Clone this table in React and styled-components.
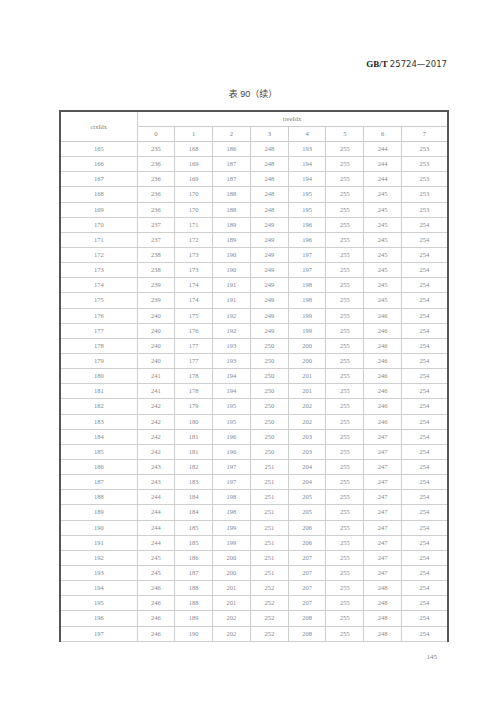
import React from "react";
import styled, { createGlobalStyle } from "styled-components";

const GlobalStyle = createGlobalStyle`
  html, body {
    margin: 0;
    padding: 0;
    background: #ffffff;
  }
`;

const rows = [
  [165, 235, 168, 186, 248, 193, 255, 244, 253],
  [166, 236, 169, 187, 248, 194, 255, 244, 253],
  [167, 236, 169, 187, 248, 194, 255, 244, 253],
  [168, 236, 170, 188, 248, 195, 255, 245, 253],
  [169, 236, 170, 188, 248, 195, 255, 245, 253],
  [170, 237, 171, 189, 249, 196, 255, 245, 254],
  [171, 237, 172, 189, 249, 196, 255, 245, 254],
  [172, 238, 173, 190, 249, 197, 255, 245, 254],
  [173, 238, 173, 190, 249, 197, 255, 245, 254],
  [174, 239, 174, 191, 249, 198, 255, 245, 254],
  [175, 239, 174, 191, 249, 198, 255, 245, 254],
  [176, 240, 175, 192, 249, 199, 255, 246, 254],
  [177, 240, 176, 192, 249, 199, 255, 246, 254],
  [178, 240, 177, 193, 250, 200, 255, 246, 254],
  [179, 240, 177, 193, 250, 200, 255, 246, 254],
  [180, 241, 178, 194, 250, 201, 255, 246, 254],
  [181, 241, 178, 194, 250, 201, 255, 246, 254],
  [182, 242, 179, 195, 250, 202, 255, 246, 254],
  [183, 242, 180, 195, 250, 202, 255, 246, 254],
  [184, 242, 181, 196, 250, 203, 255, 247, 254],
  [185, 242, 181, 196, 250, 203, 255, 247, 254],
  [186, 243, 182, 197, 251, 204, 255, 247, 254],
  [187, 243, 183, 197, 251, 204, 255, 247, 254],
  [188, 244, 184, 198, 251, 205, 255, 247, 254],
  [189, 244, 184, 198, 251, 205, 255, 247, 254],
  [190, 244, 185, 199, 251, 206, 255, 247, 254],
  [191, 244, 185, 199, 251, 206, 255, 247, 254],
  [192, 245, 186, 200, 251, 207, 255, 247, 254],
  [193, 245, 187, 200, 251, 207, 255, 247, 254],
  [194, 246, 188, 201, 252, 207, 255, 248, 254],
  [195, 246, 188, 201, 252, 207, 255, 248, 254],
  [196, 246, 189, 202, 252, 208, 255, 248, 254],
  [197, 246, 190, 202, 252, 208, 255, 248, 254]
];

const App = () => {
  return (
    <Page>
      <GlobalStyle />
      <DocCode>
        GB/T <span>25724—2017</span>
      </DocCode>
      <Caption>表 90（续）</Caption>
      <Table>
        <colgroup>
          <col style={{ width: 77 }} />
          {[0, 1, 2, 3, 4, 5, 6].map((i) => (
            <col key={i} style={{ width: 37.8 }} />
          ))}
          <col style={{ width: 46 }} />
        </colgroup>
        <thead>
          <HeadRow $height={15.5}>
            <HeadCell rowSpan={2}>ctxIdx</HeadCell>
            <HeadCell colSpan={8}>treeIdx</HeadCell>
          </HeadRow>
          <HeadRow $height={15} $last>
            {[0, 1, 2, 3, 4, 5, 6, 7].map((i) => (
              <HeadCell key={i}>{i}</HeadCell>
            ))}
          </HeadRow>
        </thead>
        <tbody>
          {rows.map((row) => (
            <Row key={row[0]}>
              {row.map((v, i) => (
                <Cell key={i}>{v}</Cell>
              ))}
            </Row>
          ))}
        </tbody>
      </Table>
      <PageNum>145</PageNum>
    </Page>
  );
};

const Page = styled.div`
  width: 500px;
  height: 707px;
  box-sizing: border-box;
  padding: 58px 53px 0 59px;
  font-family: "Liberation Serif", "Noto Sans CJK SC", serif;
  color: #808080;
`;

const DocCode = styled.div`
  text-align: right;
  font-size: 9px;
  line-height: 12px;
  font-weight: bold;
  color: #222;
  > span {
    font-family: "DejaVu Sans", "Liberation Sans", sans-serif;
    font-weight: normal;
    font-size: 8.5px;
    color: #333;
  }
`;

const Caption = styled.div`
  margin-top: 18px;
  text-align: center;
  font-family: "Liberation Sans", "Noto Sans CJK SC", sans-serif;
  font-size: 9px;
  line-height: 12px;
  color: #444;
`;

const Table = styled.table`
  margin-top: 10px;
  width: 388px;
  table-layout: fixed;
  border-collapse: collapse;
  border-top: 2px solid #555;
  border-left: 2px solid #555;
  border-right: 2px solid #555;
  border-bottom: 1px solid #999;
`;

const HeadRow = styled.tr`
  height: ${(p) => p.$height}px;
  border-bottom: ${(p) => (p.$last ? "1.5px solid #444" : "none")};
`;

const HeadCell = styled.th`
  padding: 0;
  font-weight: normal;
  font-size: 6.5px;
  line-height: 8px;
  color: #808080;
  text-align: center;
  border: 1px solid #ccc;
`;

const Row = styled.tr`
  height: 15.15px;
`;

const Cell = styled.td`
  padding: 0;
  font-size: 6.5px;
  line-height: 8px;
  color: #888;
  text-align: center;
  border: 1px solid #cfcfcf;
`;

const PageNum = styled.div`
  margin-top: 10px;
  padding-right: 10px;
  text-align: right;
  font-size: 7px;
  line-height: 10px;
  color: #808080;
`;

export default App;
